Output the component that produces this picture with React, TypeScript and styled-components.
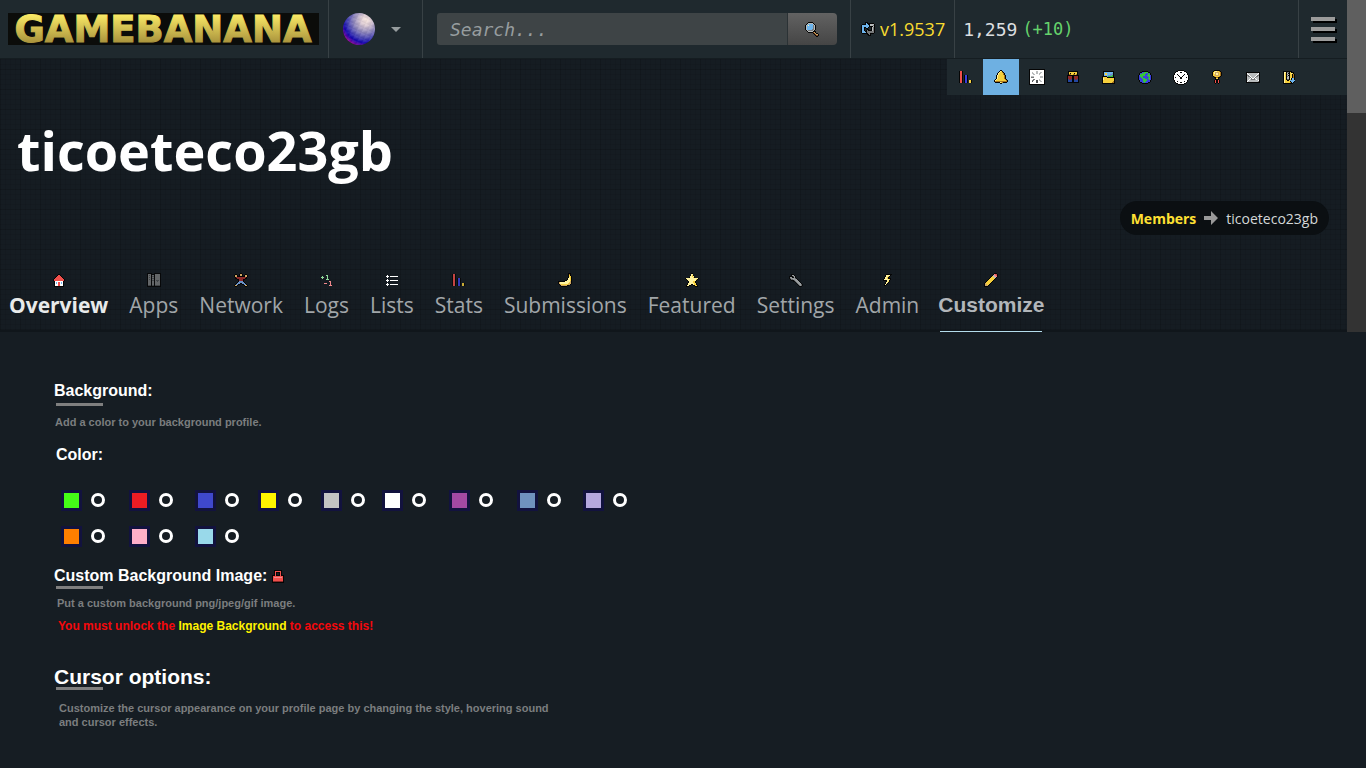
import React from "react";
import styled, { createGlobalStyle, css } from "styled-components";

const GlobalStyle = createGlobalStyle`
  *, *::before, *::after { box-sizing: border-box; }
  body {
    margin: 0;
    background: #161d23;
    color: #fff;
    font-family: "Open Sans", "Noto Sans", sans-serif;
  }
  h1, h2, h3, p, ul { margin: 0; padding: 0; }
  ul { list-style: none; }
  a { color: inherit; text-decoration: none; }
`;

/* ---------- pixel icons ---------- */

const palette: Record<string, string> = {
  k: "#050505",
  w: "#ffffff",
  s: "#b9bcbd",
  g: "#77797a",
  d: "#4e5153",
  r: "#f0504c",
  m: "#8c2a2a",
  b: "#3a40e0",
  n: "#2447a0",
  c: "#6db4ec",
  y: "#f5cf3c",
  l: "#fff3a0",
  o: "#a8741c",
  e: "#35c43a",
  f: "#cfa763",
  p: "#f0888c",
  t: "#6b93c8",
  q: "#7b4522",
  h: "#b8535a",
  j: "#8fd89a",
};

const art = {
  stats: [
    "krrk.........",
    "krrk.........",
    "krrk.........",
    "krrk.........",
    "krrk.kbbk....",
    "krrk.kbbk....",
    "krrk.kbbk....",
    "krrk.kbbk....",
    "krrk.kbbk....",
    "krrk.kbbk.yyk",
    "krrk.kbbk.yyk",
    "krrk.kbbk.yyk",
  ],
  bell: [
    "......kk......",
    ".....klyk.....",
    "....klyyok....",
    "...klyyyyok...",
    "...klyyyyok...",
    "..klyyyyyyok..",
    "..klyyyyyyok..",
    "..klyyyyyyok..",
    "..klyyyyyyok..",
    ".klyyyyyyyyok.",
    "klyyyyyyyyyyok",
    "koooooooooooOk".toLowerCase(),
    ".kkkkklyokkkk.",
    "......kk......",
  ],
  loader: [
    "kkkkkkkkkkkkkkkk",
    "kwwwwwwwwwwwwwwk",
    "kwwwwwwsswwwwwwk",
    "kwwswwwsswwsswwk",
    "kwwsswwsswsswwwk",
    "kwwwsswwwwswwwwk",
    "kwwwwwwwwwwwwwwk",
    "kwssswwwwwwssswk",
    "kwgggwwwwwwssswk",
    "kwwwwwwwwwwwwwwk",
    "kwwwggwwwwswwwwk",
    "kwwggwwddwsswwwk",
    "kwwdwwwddwwsswwk",
    "kwwwwwwddwwwwwwk",
    "kwwwwwwwwwwwwwwk",
    "kkkkkkkkkkkkkkkk",
  ],
  friends: [
    ".kkkkkkkkkk.",
    ".kyyyyyyyyk.",
    ".kykyyykyyk.",
    ".kooyyooyok.",
    "kkkkkkkkkkkk",
    "kmmmmkkmmmmk",
    "kmmmmkkmmmmk",
    "kmmmmkkmmmmk",
    "knmmnkknmmnk",
    "knnnnkknnnnk",
    "knnnnkknnnnk",
    "kkkkkkkkkkkk",
  ],
  folder: [
    ".kkkkkkkkkkk..",
    ".kccccccccck..",
    ".kcyyccccctk..",
    ".kcyyccctttk..",
    ".kccccttttek..",
    "kkkkkteeeeek..",
    "kyyyykkkkkkkk.",
    "klyyyyyyyyyyk.",
    "klyyyyyyyyyyk.",
    "kyyyyyyyyyyyk.",
    "kyyyyyyyyyyok.",
    "kyyyyyyyyyook.",
    "kkkkkkkkkkkkk.",
  ],
  globe: [
    "....kkkkkk....",
    "..kkbbeeeekk..",
    ".kbbeeeebbebk.",
    ".keeeeebbbeek.",
    "kbeeeeebbeeebk",
    "kbeeebbbbbeebk",
    "kbbeebbbbbbebk",
    "kbbbeeebbbeebk",
    "kbbbbeeeebbebk",
    ".kbbbeeeebbbk.",
    ".kbbbeeebbbbk.",
    "..kkbbebbbkk..",
    "....kkkkkk....",
  ],
  clock: [
    ".....kkkkkk.....",
    "...kkwwwwwwkk...",
    "..kwwwwkkwwwwk..",
    ".kwwwwwwwwwwwwk.",
    ".kwwkwwwwwwkwwk.",
    "kwwwwkwwwwkwwwwk",
    "kwwwwwkwwkwwwwwk",
    "kwkwwwwkkwwwwkwk",
    "kwwwwwwkkwwwwwwk",
    "kwwwwwwwwwwwwwwk",
    ".kwwwwwwwwwwwwk.",
    ".kwwkwwwwwwkwwk.",
    "..kwwwwkkwwwwk..",
    "...kkwwwwwwkk...",
    ".....kkkkkk.....",
  ],
  medal: [
    "..kkkkkk..",
    ".kyllyyok.",
    "kylffffyok",
    "kylfllfyok",
    "kyyfllfyok",
    "kyyffffyok",
    ".koyyyyok.",
    "..kkookk..",
    "...kyyk...",
    "...kkkk...",
    "..krkkrk..",
    "..krkkrk..",
    "..krkkrk..",
    "...k..k...",
  ],
  mail: [
    "kkkkkkkkkkkkkk",
    "kwsssssssssswk",
    "kswsssssssswsk",
    "kggwsssssswggk",
    "ksggwsssswggsk",
    "ksssgwsswgsssk",
    "kssswgwwgwsssk",
    "ksswsggggswssk",
    "kswssssssssswk",
    "kwssssssssssgk",
    "kkkkkkkkkkkkkk",
  ],
  archive: [
    "kkkkkkkkk....",
    "kllkggkykkk..",
    "klykskkylyk..",
    "klykgskyykok.",
    "klykskkyykok.",
    "klykgskyykok.",
    "klyksskyykok.",
    "klykssklkcck.",
    "klykddkykcck.",
    "klyykkyccccc.",
    "klyyyyykccck.",
    "klyyyyyokck..",
    "kkkkkkkkkk...",
  ],
  home: [
    ".....kk.....",
    "....krrk....",
    "...krrrrk...",
    "..krrrrrrk..",
    ".krrrrrrrrk.",
    "krrrrrrrrrrk",
    "krrrrrrrrrrk",
    ".kwwwwwwwwk.",
    ".kwcwrrwcwk.",
    ".kwcwrrwcwk.",
    ".kwwwrrwwwk.",
    ".kwwwrrwwwk.",
    ".kkkkkkkkkk.",
  ],
  apps: [
    "kkkkk..kkkkkkk",
    "kgggkkkkgggggk",
    "kgdgkggkgggggk",
    "kgggkddkgggggk",
    "kgdgkggkgggggk",
    "kgggkddkgggggk",
    "kgdgkggkgggggk",
    "kgggkddkgdddgk",
    "kgggkggkggdggk",
    "kgggkggkgggggk",
    "kgggkggkgggggk",
    "kgggkggkgggggk",
    "kdddkddkdddddk",
    "kkkkkkkkkkkkkk",
  ],
  network: [
    "......kk......",
    ".kk..kffk..kk.",
    "kffk.kffk.kffk",
    "kffkkkkkkkkffk",
    ".kmmmmmmmmmmk.",
    ".kkmmmmmmmmkk.",
    "...kkmmmmkk...",
    "....kmmmmk....",
    "....kttttk....",
    "...kttttttk...",
    "..ktttkktttk..",
    ".kttkk..kkttk.",
    "kffk......kffk",
    ".kk........kk.",
  ],
  logs: [
    ".....jj....",
    ".j....j....",
    "jjj...j....",
    ".j....j....",
    ".....jjj...",
    "...........",
    "........pp.",
    ".........p.",
    "...ppp...p.",
    ".........p.",
    "........ppp",
  ],
  lists: [
    ".w..........",
    "www.wwwwwwww",
    ".w..........",
    "............",
    ".w..........",
    "www.wwwwwwww",
    ".w..........",
    "............",
    ".w..........",
    "www.wwwwwwww",
    ".w..........",
  ],
  banana: [
    "..........kkk.",
    "..........kok.",
    "..........kyk.",
    "..........kyyk",
    "..........klyk",
    ".........kllyk",
    ".........kllyk",
    ".......kklllyk",
    "kkkkkkklllllfk",
    "kflllllllllyfk",
    "kfllllllllyffk",
    ".kfyyyyyyyffk.",
    "..kffffffkk...",
    "...kkkkkk.....",
  ],
  star: [
    "......kk......",
    "......ll......",
    ".....klyk.....",
    ".....llyl.....",
    "....klllyk....",
    "kllllllllllllk",
    ".klllllllllyk.",
    "..kllllllllk..",
    "...kllllyyk...",
    "...kllllyyk...",
    "..kllllllyyk..",
    "..klllkklyyk..",
    ".kllkk..kkyyk.",
    ".kkk......kkk.",
  ],
  wrench: [
    "..kkk.........",
    "..kssk........",
    "kkkkgsk.......",
    "ksskksk.......",
    "kgssssgk......",
    ".kggssssk.....",
    "..kkkgsssk....",
    "....kkgsssk...",
    "......kgsssk..",
    ".......kgsssk.",
    "........kgssgk",
    ".........kgsgk",
    "..........kkk.",
  ],
  bolt: [
    "...kkkkkk",
    "..kllllk.",
    "..kllyk..",
    ".kllyk...",
    ".kllykkk.",
    "klllllyk.",
    "kkkkllk..",
    "...klyk..",
    "..kllk...",
    "..klk....",
    ".klk.....",
    ".kk......",
  ],
  pencil: [
    "..........kkk.",
    ".........kprhk",
    "........kspprk",
    ".......kyssppk",
    "......kyyyssk.",
    ".....kyyyyyk..",
    "....kyyyyyk...",
    "...kyyyyyk....",
    "..kyyyyyk.....",
    ".kyyyyyk......",
    "kfyyyyk.......",
    "kffyyk........",
    "kfffk.........",
    "kkkk..........",
  ],
  lock: [
    "..kkkkkkkk..",
    "..krrrrrrk..",
    "..krkkkkrk..",
    "..krk..krk..",
    "..krk..krk..",
    "kkkrkkkkrkkk",
    "krrrrrrrrrrk",
    "krpppppppprk",
    "krrrrrrrrrrk",
    "krrrrrrrrrrk",
    "krrrrrrrrrrk",
    "kmmmmmmmmmmk",
    "kkkkkkkkkkkk",
  ],
  refresh: [
    "....kkk.......",
    "....kckkkkkkk.",
    ".kkkkcckkssssk",
    "kcccccccksssgk",
    "kccccccckkkksk",
    "kcckkcck..ksgk",
    "kcck.kk...ksgk",
    "kcck..kk..ksgk",
    "kcck.kgkkkksgk",
    "kccckkgggggggk",
    "kcccckgggggggk",
    ".kkkkkkggkkkk.",
    "......kkgk....",
    ".......kkk....",
  ],
  magnifier: [
    "...kkkkk.......",
    "..ksssssk......",
    ".kscccccsk.....",
    "ksclccccgsk....",
    "ksccccccgsk....",
    "ksccccccgsk....",
    "ksccccccgsk....",
    "kscccccggsk....",
    ".ksgggggsk.....",
    "..kssssskkk....",
    "...kkkkkqfk....",
    "........kqfkk..",
    ".........kqffk.",
    "..........kqqk.",
    "...........kk..",
  ],
} as const;

type IconName = keyof typeof art;

const PixelSvg = styled.svg`
  display: block;
  flex: none;
`;

function PixelIcon({ name }: { name: IconName }) {
  const rows = art[name];
  const width = rows[0].length;
  const cells: React.ReactNode[] = [];
  rows.forEach((row, y) => {
    let x = 0;
    while (x < row.length) {
      let end = x + 1;
      while (end < row.length && row[end] === row[x]) end++;
      if (row[x] !== ".") {
        cells.push(
          <rect key={`${x}-${y}`} x={x} y={y} width={end - x} height={1} fill={palette[row[x]]} />
        );
      }
      x = end;
    }
  });
  return (
    <PixelSvg
      width={width}
      height={rows.length}
      viewBox={`0 0 ${width} ${rows.length}`}
      shapeRendering="crispEdges"
      aria-hidden="true"
    >
      {cells}
    </PixelSvg>
  );
}

/* ---------- top region ---------- */

const Page = styled.div`
  min-height: 100vh;
`;

const Top = styled.div`
  display: flex;
`;

const Hero = styled.div`
  flex: 1;
  min-width: 0;
  background-color: #151c22;
  background-image:
    repeating-linear-gradient(90deg, rgba(0, 0, 0, 0.07) 0 1px, transparent 1px 5px),
    repeating-linear-gradient(0deg, rgba(0, 0, 0, 0.07) 0 1px, transparent 1px 5px),
    repeating-linear-gradient(90deg, rgba(0, 0, 0, 0.08) 0 1px, transparent 1px 20px),
    repeating-linear-gradient(0deg, rgba(0, 0, 0, 0.08) 0 1px, transparent 1px 20px);
  border-bottom: 2px solid #10161b;
`;

const ScrollTrack = styled.div`
  flex: none;
  width: 19px;
  background: #333;
`;

const ScrollThumb = styled.div`
  height: 113px;
  background: #5f5f5f;
`;

const Header = styled.header`
  display: flex;
  height: 59px;
  background: #1f292e;
  border-bottom: 1px solid #151d21;
`;

const HeaderCell = styled.div<{ $pad?: string; $grow?: boolean; $last?: boolean }>`
  display: flex;
  align-items: center;
  flex: ${(p) => (p.$grow ? "1" : "none")};
  padding: ${(p) => p.$pad ?? "0"};
  border-right: ${(p) => (p.$last ? "0" : "1px solid #384145")};
`;

const plainButton = css`
  padding: 0;
  border: 0;
  background: none;
  color: inherit;
  font: inherit;
  cursor: pointer;
`;

const LogoLink = styled.a`
  display: block;
`;

const AccountButton = styled.button`
  ${plainButton}
  display: flex;
  align-items: center;
  gap: 16px;
`;

const SearchForm = styled.form`
  display: flex;
  width: 400px;
  height: 32px;
`;

const SearchInput = styled.input`
  flex: 1;
  min-width: 0;
  padding: 0 13px;
  border: 0;
  border-radius: 3px 0 0 3px;
  background: #3e4446;
  color: #d0d4d5;
  font: italic 18px "DejaVu Sans Mono", monospace;
  &::placeholder {
    color: #979d9f;
    opacity: 1;
  }
`;

const SearchButton = styled.button`
  ${plainButton}
  display: flex;
  align-items: center;
  justify-content: center;
  width: 50px;
  border-left: 1px solid #2b3235;
  border-radius: 0 4px 4px 0;
  background: linear-gradient(#626262, #454545);
`;

const Version = styled.a`
  display: flex;
  align-items: center;
  gap: 5px;
  color: #f8dc30;
  font-size: 18px;
`;

const Points = styled.p`
  display: flex;
  gap: 5px;
  color: #dcdfe0;
  font: 18px "DejaVu Sans Mono", monospace;
`;

const Gain = styled.span`
  color: #66d36c;
  font-size: 17px;
`;

const MenuButton = styled.button`
  ${plainButton}
  display: flex;
  flex-direction: column;
  gap: 6px;
`;

const MenuBar = styled.span`
  width: 24px;
  height: 4px;
  background: #9b9b9b;
  box-shadow: 2px 2px 0 #000;
`;

const Toolbar = styled.div`
  display: flex;
  width: max-content;
  margin-left: auto;
  padding-right: 40px;
  background: #1f292e;
`;

const ToolButton = styled.button<{ $active?: boolean }>`
  ${plainButton}
  display: flex;
  align-items: center;
  justify-content: center;
  width: 36px;
  height: 36px;
  background: ${(p) => (p.$active ? "#6eb0e2" : "transparent")};
`;

const Title = styled.h1`
  padding: 23px 17px 0;
  font-size: 54px;
  line-height: 64px;
  font-weight: 700;
`;

const Breadcrumb = styled.nav`
  display: flex;
  align-items: center;
  gap: 8px;
  width: max-content;
  height: 34px;
  margin: 19px 18px 0 auto;
  padding: 0 11px;
  border-radius: 17px;
  background: #0b0f12;
  color: #d4d7d8;
  font-size: 14px;
`;

const Crumb = styled.a`
  color: #ffe033;
  font-weight: 700;
`;

const Tabs = styled.ul`
  display: flex;
  gap: 21px;
  margin-top: 36px;
  padding: 0 9px;
`;

const Tab = styled.a<{ $current?: boolean; $marked?: boolean }>`
  display: flex;
  flex-direction: column;
  align-items: center;
  height: 59px;
  color: ${(p) => (p.$current ? "#e8eaea" : "#a1a6a9")};
  font-size: 21px;
  line-height: 26px;
  font-weight: ${(p) => (p.$current ? 700 : 400)};
  ${(p) =>
    p.$marked &&
    css`
      height: 61px;
      margin: 0 -2px -2px;
      color: #b2b6ba;
      font-family: "Liberation Sans", Arial, sans-serif;
      font-weight: 700;
      &::after {
        content: "";
        width: 102px;
        height: 1px;
        margin-top: auto;
        background: #b4dcec;
      }
    `}
`;

const TabIcon = styled.span<{ $dim?: boolean }>`
  display: flex;
  align-items: center;
  height: 18px;
  margin-bottom: 3px;
  opacity: ${(p) => (p.$dim ? 0.8 : 1)};
`;

/* ---------- customize form ---------- */

const Content = styled.main`
  padding: 49px 54px;
  font-family: "Liberation Sans", Arial, sans-serif;
  font-weight: 700;
`;

const Section = styled.section<{ $space?: number }>`
  padding-top: ${(p) => p.$space ?? 0}px;
`;

const Heading = styled.h2<{ $large?: boolean }>`
  display: flex;
  align-items: center;
  gap: 5px;
  font-size: ${(p) => (p.$large ? 21 : 16)}px;
  line-height: ${(p) => (p.$large ? 24 : 20)}px;
`;

const Underline = styled.div<{ $top: number }>`
  width: 47px;
  height: 3px;
  margin: ${(p) => p.$top}px 0 0 2px;
  background: #7f7f7f;
`;

const Hint = styled.p<{ $top: number; $indent: number }>`
  max-width: 516px;
  padding-top: ${(p) => p.$top}px;
  padding-left: ${(p) => p.$indent}px;
  color: #7b7d7f;
  font-size: 11px;
  line-height: 14px;
`;

const SubHeading = styled.h3`
  padding: 16px 0 17px 2px;
  font-size: 16px;
  line-height: 20px;
`;

const Swatches = styled.div`
  display: grid;
  grid-template-columns: 68px 66px 63px 63px 61px 67px 68px 66px 44px;
  grid-auto-rows: 36px;
  padding-left: 7px;
`;

const SwatchLabel = styled.label`
  display: flex;
  align-items: center;
  gap: 9px;
`;

const Chip = styled.span<{ $color: string }>`
  width: 21px;
  height: 21px;
  border: 3px solid #12123e;
  background: ${(p) => p.$color};
`;

const Radio = styled.input`
  appearance: none;
  width: 14px;
  height: 14px;
  margin: 0;
  border: 3px solid #fff;
  border-radius: 50%;
  &:checked {
    background: #6eb0e2;
  }
`;

const Warning = styled.p`
  padding: 8px 0 0 4px;
  color: #f4080c;
  font-size: 12px;
  line-height: 16px;
`;

const WarningLink = styled.a`
  color: #fff200;
`;

/* ---------- data ---------- */

const tools: { icon: IconName; label: string; active?: boolean }[] = [
  { icon: "stats", label: "Stats" },
  { icon: "bell", label: "Notifications", active: true },
  { icon: "loader", label: "Activity" },
  { icon: "friends", label: "Buddies" },
  { icon: "folder", label: "Images" },
  { icon: "globe", label: "World" },
  { icon: "clock", label: "History" },
  { icon: "medal", label: "Medals" },
  { icon: "mail", label: "Messages" },
  { icon: "archive", label: "Downloads" },
];

const tabs: { icon: IconName; label: string; current?: boolean; marked?: boolean; dim?: boolean }[] = [
  { icon: "home", label: "Overview", current: true },
  { icon: "apps", label: "Apps", dim: true },
  { icon: "network", label: "Network" },
  { icon: "logs", label: "Logs" },
  { icon: "lists", label: "Lists" },
  { icon: "stats", label: "Stats", dim: true },
  { icon: "banana", label: "Submissions" },
  { icon: "star", label: "Featured" },
  { icon: "wrench", label: "Settings", dim: true },
  { icon: "bolt", label: "Admin" },
  { icon: "pencil", label: "Customize", marked: true },
];

const colors = [
  ["Green", "#44fb18"],
  ["Red", "#ed1c24"],
  ["Indigo", "#3f48cc"],
  ["Yellow", "#fff200"],
  ["Grey", "#c3c3c3"],
  ["White", "#ffffff"],
  ["Purple", "#a349a4"],
  ["Steel blue", "#7092be"],
  ["Lavender", "#b5a8df"],
  ["Orange", "#ff7f00"],
  ["Pink", "#ffaec9"],
  ["Light blue", "#99d9ea"],
];

function Logo() {
  return (
    <PixelSvg width="311" height="48" viewBox="0 0 311 48" role="img" aria-label="GameBanana">
      <defs>
        <linearGradient id="gold" x1="0" y1="10" x2="0" y2="38" gradientUnits="userSpaceOnUse">
          <stop offset="0" stopColor="#f9e965" />
          <stop offset="1" stopColor="#a8923c" />
        </linearGradient>
      </defs>
      <rect y="8" width="311" height="32" fill="#0b0c0a" />
      <text
        x="155"
        y="37"
        textAnchor="middle"
        fontFamily="DejaVu Sans, sans-serif"
        fontWeight="700"
        fontSize="37"
        fill="url(#gold)"
        stroke="url(#gold)"
        strokeWidth="1"
        strokeLinejoin="miter"
      >
        GAMEBANANA
      </text>
    </PixelSvg>
  );
}

function Avatar() {
  return (
    <PixelSvg width="32" height="32" viewBox="0 0 32 32" aria-hidden="true">
      <defs>
        <radialGradient id="ball" cx="0.72" cy="0.22" r="0.86">
          <stop offset="0" stopColor="#fdeae2" />
          <stop offset="0.2" stopColor="#dccbd4" />
          <stop offset="0.45" stopColor="#9088bc" />
          <stop offset="0.68" stopColor="#4440b4" />
          <stop offset="0.82" stopColor="#1408b0" />
          <stop offset="0.92" stopColor="#5204a4" />
          <stop offset="1" stopColor="#a00498" />
        </radialGradient>
        <pattern id="facets" width="5" height="5" patternUnits="userSpaceOnUse" patternTransform="rotate(25)">
          <path d="M0 0H5L0 5Z" fill="#fff" opacity="0.06" />
          <path d="M5 0V5H0Z" fill="#002" opacity="0.06" />
        </pattern>
      </defs>
      <circle cx="16" cy="16" r="16" fill="url(#ball)" />
      <circle cx="16" cy="16" r="16" fill="url(#facets)" />
    </PixelSvg>
  );
}

export default function App() {
  return (
    <Page>
      <GlobalStyle />
      <Top>
        <Hero>
          <Header>
            <HeaderCell $pad="0 9px 0 8px">
              <LogoLink href="#">
                <Logo />
              </LogoLink>
            </HeaderCell>
            <HeaderCell $pad="0 21px 0 14px">
              <AccountButton type="button" aria-label="Account menu">
                <Avatar />
                <PixelSvg width="10" height="5" viewBox="0 0 10 5" aria-hidden="true">
                  <path d="M0 0H10L5 5Z" fill="#969c9e" />
                </PixelSvg>
              </AccountButton>
            </HeaderCell>
            <HeaderCell $pad="0 13px 0 14px">
              <SearchForm role="search" onSubmit={(e) => e.preventDefault()}>
                <SearchInput type="text" placeholder="Search..." aria-label="Search" />
                <SearchButton type="submit" aria-label="Search">
                  <PixelIcon name="magnifier" />
                </SearchButton>
              </SearchForm>
            </HeaderCell>
            <HeaderCell $pad="0 9px 0 10px">
              <Version href="#">
                <PixelIcon name="refresh" />
                v1.9537
              </Version>
            </HeaderCell>
            <HeaderCell $pad="0 8px" $grow>
              <Points>
                1,259 <Gain>(+10)</Gain>
              </Points>
            </HeaderCell>
            <HeaderCell $pad="0 12px" $last>
              <MenuButton type="button" aria-label="Menu">
                <MenuBar />
                <MenuBar />
                <MenuBar />
              </MenuButton>
            </HeaderCell>
          </Header>

          <Toolbar>
            {tools.map((t) => (
              <ToolButton key={t.label} type="button" aria-label={t.label} $active={t.active}>
                <PixelIcon name={t.icon} />
              </ToolButton>
            ))}
          </Toolbar>

          <Title>ticoeteco23gb</Title>

          <Breadcrumb aria-label="Breadcrumb">
            <Crumb href="#">Members</Crumb>
            <PixelSvg width="14" height="14" viewBox="0 0 14 14" aria-hidden="true">
              <path d="M0 5H7V0L14 7L7 14V9H0Z" fill="#999" />
            </PixelSvg>
            <span>ticoeteco23gb</span>
          </Breadcrumb>

          <nav aria-label="Profile">
            <Tabs>
              {tabs.map((t) => (
                <li key={t.label}>
                  <Tab href="#" $current={t.current} $marked={t.marked}>
                    <TabIcon $dim={t.dim}>
                      <PixelIcon name={t.icon} />
                    </TabIcon>
                    {t.label}
                  </Tab>
                </li>
              ))}
            </Tabs>
          </nav>
        </Hero>
        <ScrollTrack>
          <ScrollThumb />
        </ScrollTrack>
      </Top>

      <Content>
        <Section>
          <Heading>Background:</Heading>
          <Underline $top={2} />
          <Hint $top={9} $indent={1}>
            Add a color to your background profile.
          </Hint>
          <SubHeading id="color-heading">Color:</SubHeading>
          <Swatches role="radiogroup" aria-labelledby="color-heading">
            {colors.map(([name, value]) => (
              <SwatchLabel key={name}>
                <Chip $color={value} />
                <Radio type="radio" name="color" value={value} aria-label={name} />
              </SwatchLabel>
            ))}
          </Swatches>
        </Section>

        <Section $space={12}>
          <Heading>
            Custom Background Image:
            <PixelIcon name="lock" />
          </Heading>
          <Underline $top={0} />
          <Hint $top={7} $indent={3}>
            Put a custom background png/jpeg/gif image.
          </Hint>
          <Warning>
            You must unlock the <WarningLink href="#">Image Background</WarningLink> to access this!
          </Warning>
        </Section>

        <Section $space={31}>
          <Heading $large>Cursor options:</Heading>
          <Underline $top={-2} />
          <Hint $top={11} $indent={5}>
            Customize the cursor appearance on your profile page by changing the style, hovering sound and cursor
            effects.
          </Hint>
        </Section>
      </Content>
    </Page>
  );
}
